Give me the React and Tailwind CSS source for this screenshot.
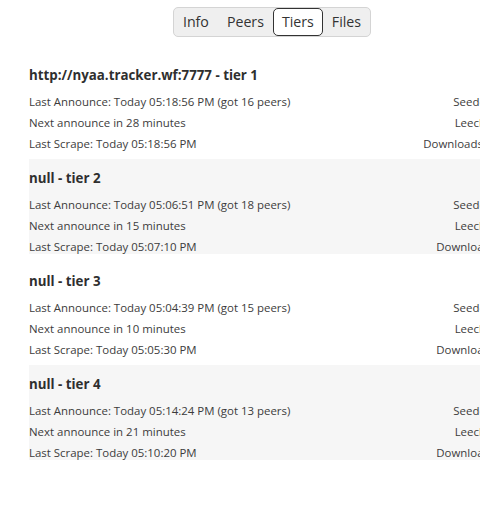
import React from 'react';

const tabs = ['Info', 'Peers', 'Tiers', 'Files'];

const tiers = [
  { name: 'http://nyaa.tracker.wf:7777 - tier 1', announce: '05:18:56 PM (got 16 peers)', next: 28, scrape: '05:18:56 PM', seeders: 12, leechers: 3, downloads: 1024 },
  { name: 'null - tier 2', announce: '05:06:51 PM (got 18 peers)', next: 15, scrape: '05:07:10 PM', seeders: 12, leechers: 3, downloads: 46 },
  { name: 'null - tier 3', announce: '05:04:39 PM (got 15 peers)', next: 10, scrape: '05:05:30 PM', seeders: 12, leechers: 3, downloads: 46 },
  { name: 'null - tier 4', announce: '05:14:24 PM (got 13 peers)', next: 21, scrape: '05:10:20 PM', seeders: 12, leechers: 3, downloads: 46 },
];

const Row = ({ left, right }) => (
  <div className="flex items-center justify-between leading-[17px]">
    <span>{left}</span>
    <span className="whitespace-nowrap text-right">{right}</span>
  </div>
);

const Tier = ({ tier, shaded }) => (
  <div className={`h-[95px] pt-[9px] ${shaded ? 'bg-[#f6f6f6]' : ''}`}>
    <div className="text-[13.3px] font-bold leading-[20px] text-[#2f2f2f]">{tier.name}</div>
    <div className="mt-[8px] flex flex-col gap-[4px] text-[11.45px] text-[#3c3c3c]">
      <Row left={`Last Announce: Today ${tier.announce}`} right={`Seeders: ${tier.seeders}`} />
      <Row left={`Next announce in ${tier.next} minutes`} right={`Leechers: ${tier.leechers}`} />
      <Row left={`Last Scrape: Today ${tier.scrape}`} right={`Downloads: ${tier.downloads}`} />
    </div>
  </div>
);

const App = () => {
  return (
    <div className="h-[508px] w-[480px] overflow-hidden bg-white" style={{ fontFamily: '"Open Sans", "Noto Sans", sans-serif' }}>
      <div className="w-[544px]">
        <div className="flex justify-center pt-[7px]">
          <div className="flex h-[30px] items-center rounded-[5px] border border-[#d4d4d4] bg-[#efefef] text-[14.2px] text-[#333]">
            {tabs.map((t) =>
              t === 'Tiers' ? (
                <div key={t} className="flex h-[28px] items-center rounded-[5px] border border-[#333] bg-white px-[8px]">
                  {t}
                </div>
              ) : (
                <div key={t} className="flex h-[28px] items-center px-[9px]">
                  {t}
                </div>
              )
            )}
          </div>
        </div>

        <div className="mt-[19px] flex flex-col gap-[8px] px-[29px]">
          {tiers.map((tier, i) => (
            <Tier key={tier.name} tier={tier} shaded={i % 2 === 1} />
          ))}
        </div>
      </div>
    </div>
  );
};

export default App;
